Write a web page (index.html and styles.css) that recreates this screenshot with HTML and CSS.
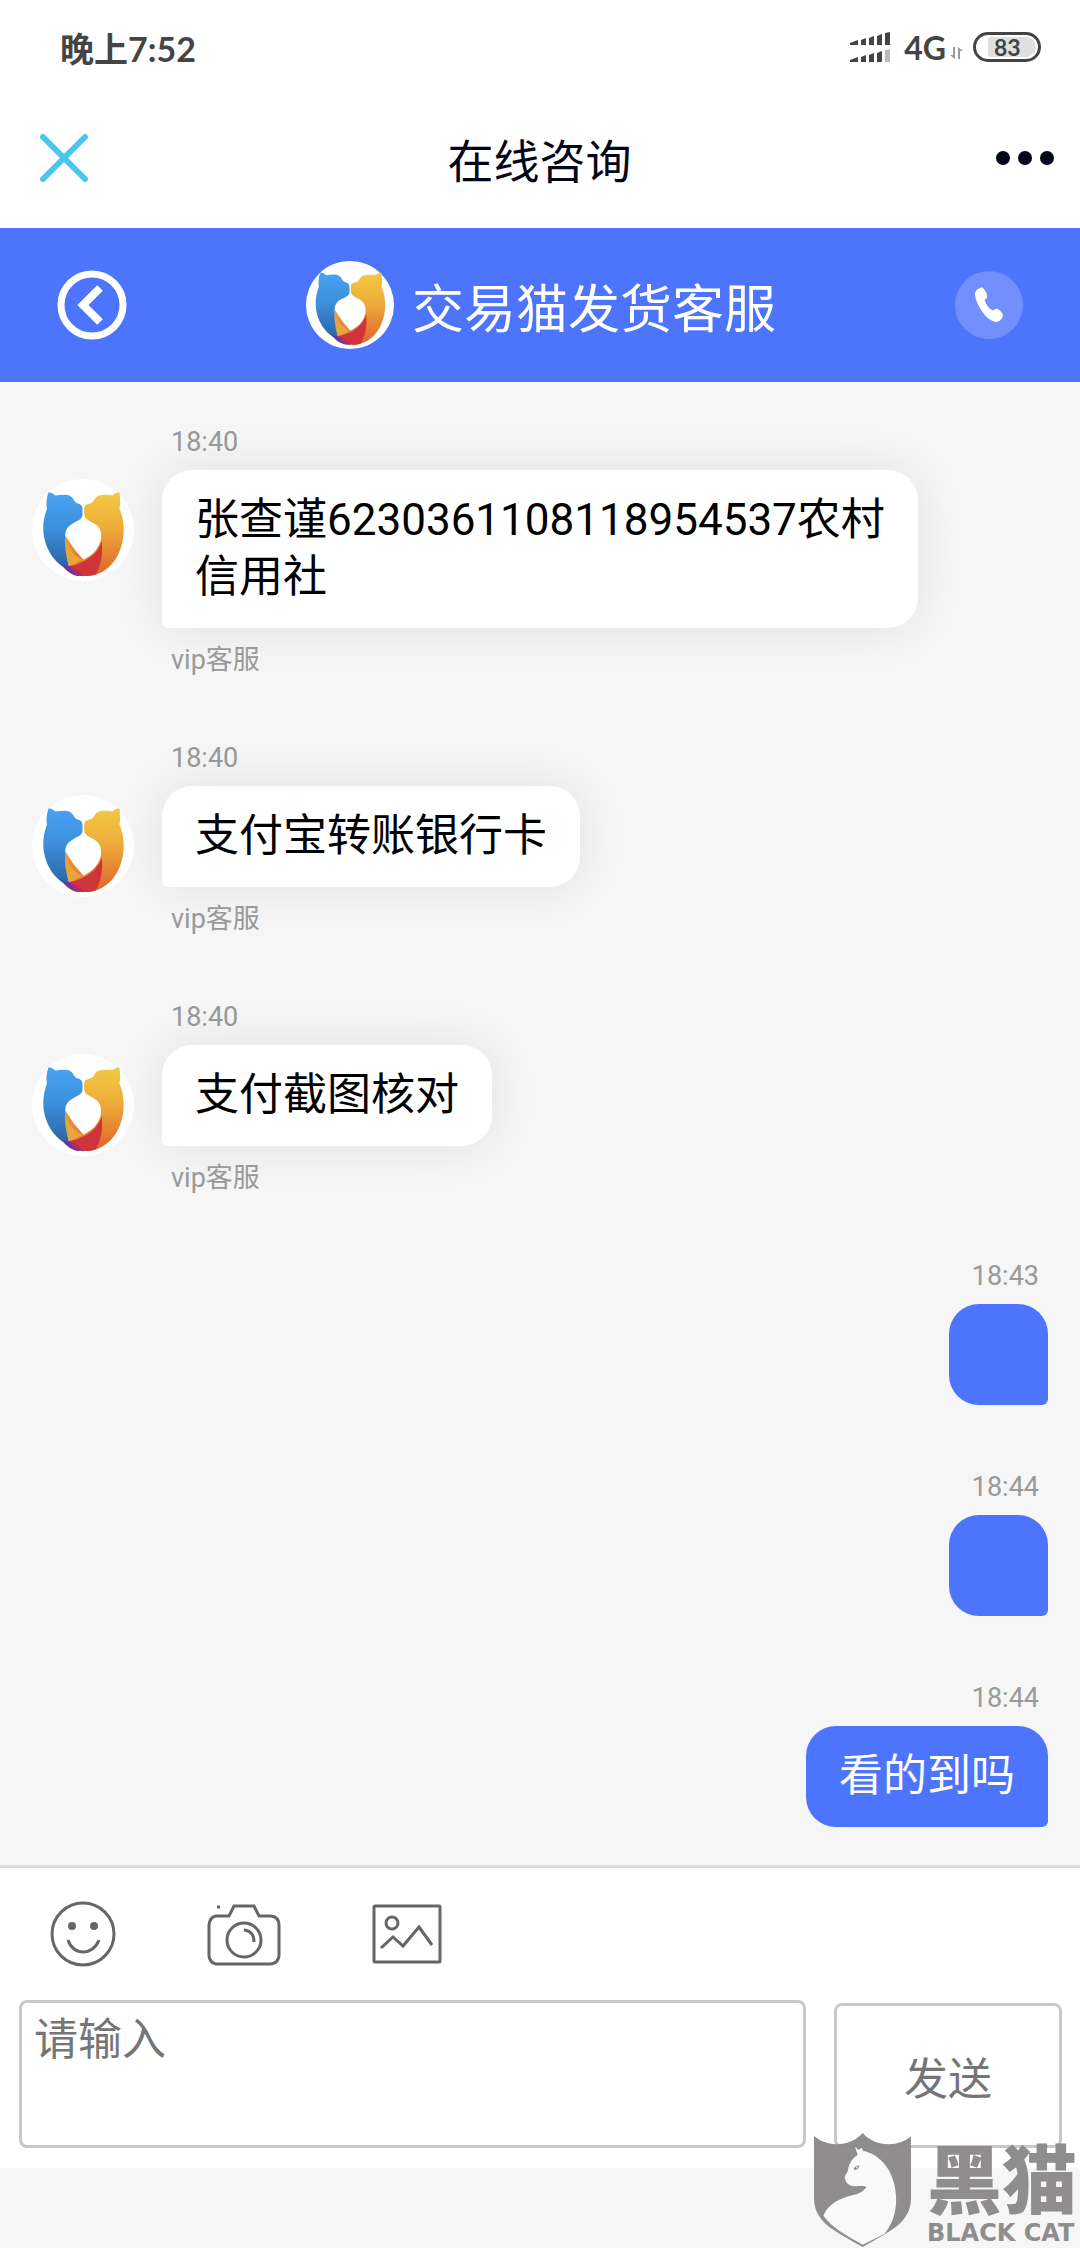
FILE: index.html
```html
<!DOCTYPE html>
<html lang="zh-CN">
<head>
  <meta charset="UTF-8">
  <meta name="viewport" content="width=device-width, initial-scale=1.0">
  <title>在线咨询</title>
  <link rel="stylesheet" href="styles.css">
</head>
<body>
  <!-- shared logo, used in the header and next to each message -->
  <svg class="defs" width="0" height="0" aria-hidden="true">
    <defs>
      <linearGradient id="blue" x1="0" y1="0" x2="0" y2="1">
        <stop offset="0" stop-color="#47a3f3"/>
        <stop offset="0.45" stop-color="#3d8fdc"/>
        <stop offset="1" stop-color="#2a62a0"/>
      </linearGradient>
      <linearGradient id="gold" x1="0" y1="0" x2="0" y2="1">
        <stop offset="0" stop-color="#f3c843"/>
        <stop offset="0.4" stop-color="#eeae3a"/>
        <stop offset="1" stop-color="#e0622c"/>
      </linearGradient>
      <symbol id="logo" viewBox="38 205 307 307">
        <circle cx="191.500" cy="358.500" r="153.500" fill="#fff"/>
        <path fill="url(#gold)" d="M302 247C292 243 286 251 280 254C264 252 247 252 237 256C227 259 227 269 219 276C211 282 197 279 195 292V312C196 327 212 331 225 339C240 348 247 360 246 382C242 413 221 434 193 448L165 416L138 374C135 414 142 449 156 479C173 493 198 501 222 495C281 481 316 420 314 352C313 325 307 308 301 293C306 279 302 266 302 247Z"/>
        <path fill="#e9a43b" d="M138 385C145 412 164 436 190 449L151 468C140 441 136 416 138 385Z"/>
        <path fill="url(#blue)" d="M88 245C98 245 103 252 110 255C125 252 144 250 154 257C164 263 163 274 174 278C185 281 190 285 190 297V312C189 327 176 330 162 338C145 347 138 358 138 378C135 415 143 447 153 480C103 461 72 407 72 354C72 328 77 312 83 294C80 278 82 261 88 245Z"/>
        <path fill="#cf343c" d="M248 392C236 429 205 457 151 467L154 481C175 497 205 502 230 492C245 466 252 431 248 392Z"/>
        <path fill="#6c359a" d="M124 459C133 465 143 468 151 467C157 480 168 489 186 497C160 498 139 481 124 459Z"/>
        <path fill="#b02c68" d="M151 467C161 468 182 483 194 498C174 497 161 488 151 467Z"/>
      </symbol>
    </defs>
  </svg>

  <div class="status-bar">
    <span class="clock">晚上7:52</span>
    <div class="status-icons">
      <svg class="signal" viewBox="0 0 40 31" aria-hidden="true">
        <g fill="#444">
          <path d="M0 11L8 8V13H0ZM11 8L16 6V13H11ZM19 6L24 4V13H19ZM27 4L32 2V13H27ZM35 1L40 0V13H35Z"/>
          <path d="M0 28L8 25V30H0ZM11 25L16 23V30H11ZM19 23L24 21V30H19ZM27 21L32 19V30H27Z"/>
        </g>
        <path fill="#bbb" d="M35 18L40 17V30H35Z"/>
      </svg>
      <span class="network">4G</span>
      <svg class="traffic" viewBox="0 0 14 12" aria-hidden="true">
        <path fill="#999" d="M3 0H5V12L0 8H3ZM8 12V0L13 4H10V12Z"/>
      </svg>
      <span class="battery"><span class="battery-level">83</span></span>
    </div>
  </div>

  <nav class="nav-bar">
    <button type="button" class="icon-button" aria-label="关闭">
      <svg width="48" height="48" viewBox="0 0 48 48" fill="none" stroke="#4cc5f1" stroke-width="6" stroke-linecap="round">
        <path d="M3 3L45 45M45 3L3 45"/>
      </svg>
    </button>
    <h1>在线咨询</h1>
    <button type="button" class="icon-button" aria-label="更多">
      <svg width="64" height="16" viewBox="0 0 64 16" fill="#030519">
        <circle cx="12" cy="8" r="7"/>
        <circle cx="34" cy="8" r="7"/>
        <circle cx="56" cy="8" r="7"/>
      </svg>
    </button>
  </nav>

  <header class="chat-header">
    <button type="button" class="icon-button" aria-label="返回">
      <svg width="70" height="70" viewBox="0 0 70 70" fill="none" stroke="#fff">
        <circle cx="35" cy="35" r="31" stroke-width="7"/>
        <path d="M43 18L26 35L43 52" stroke-width="8"/>
      </svg>
    </button>
    <div class="agent">
      <svg class="agent-logo" aria-hidden="true"><use href="#logo"/></svg>
      <h2>交易猫发货客服</h2>
    </div>
    <button type="button" class="icon-button call" aria-label="电话">
      <svg width="28" height="36" viewBox="0 0 28 36" fill="#fff">
        <path d="M3 2C5 1 7 0 8 1C10 3 13 8 12 10C12 12 9 12 10 14C12 19 14 21 17 23C19 24 20 21 23 22C26 24 28 27 28 29C27 32 24 35 21 35C15 34 10 29 6 23C2 16 0 11 0 7C0 5 1 3 3 2Z"/>
      </svg>
    </button>
  </header>

  <main class="messages">
    <div class="message received">
      <svg class="avatar" aria-hidden="true"><use href="#logo"/></svg>
      <div class="content">
        <time>18:40</time>
        <p class="bubble">张查谨6230361108118954537农村信用社</p>
        <span class="sender">vip客服</span>
      </div>
    </div>
    <div class="message received">
      <svg class="avatar" aria-hidden="true"><use href="#logo"/></svg>
      <div class="content">
        <time>18:40</time>
        <p class="bubble">支付宝转账银行卡</p>
        <span class="sender">vip客服</span>
      </div>
    </div>
    <div class="message received">
      <svg class="avatar" aria-hidden="true"><use href="#logo"/></svg>
      <div class="content">
        <time>18:40</time>
        <p class="bubble">支付截图核对</p>
        <span class="sender">vip客服</span>
      </div>
    </div>
    <div class="message sent">
      <div class="content">
        <time>18:43</time>
        <p class="bubble"></p>
      </div>
    </div>
    <div class="message sent">
      <div class="content">
        <time>18:44</time>
        <p class="bubble"></p>
      </div>
    </div>
    <div class="message sent">
      <div class="content">
        <time>18:44</time>
        <p class="bubble">看的到吗</p>
      </div>
    </div>
  </main>

  <form class="composer">
    <div class="tools">
      <button type="button" class="icon-button" aria-label="表情">
        <svg width="66" height="66" viewBox="0 0 66 66" fill="none" stroke="#666" stroke-width="3">
          <circle cx="33" cy="33" r="31"/>
          <circle cx="22" cy="25" r="4" fill="#666" stroke="none"/>
          <circle cx="44" cy="25" r="4" fill="#666" stroke="none"/>
          <path d="M18 39C23 55 43 55 49 39"/>
        </svg>
      </button>
      <button type="button" class="icon-button" aria-label="拍照">
        <svg width="74" height="66" viewBox="0 0 74 66" fill="none" stroke="#666" stroke-width="3">
          <path d="M9 15H22L27 5H47L52 15H64Q72 16 72 24V55Q71 62 64 63H9Q3 62 2 55V24Q3 16 9 15Z"/>
          <circle cx="37" cy="39" r="17"/>
          <path d="M37 29Q47 30 47 41"/>
          <path d="M10 6H13"/>
        </svg>
      </button>
      <button type="button" class="icon-button" aria-label="图片">
        <svg width="70" height="60" viewBox="0 0 70 60" fill="none" stroke="#666" stroke-width="3">
          <rect x="2" y="2" width="66" height="56" rx="1"/>
          <circle cx="20" cy="19" r="6"/>
          <path d="M9 44L21 33L31 42L47 23L60 41"/>
        </svg>
      </button>
    </div>
    <div class="input-row">
      <textarea id="message-input" aria-label="消息" placeholder="请输入"></textarea>
      <button type="submit" class="send">发送</button>
    </div>
  </form>

  <div class="watermark">
    <svg width="97" height="114" viewBox="153 519 291 342" aria-hidden="true">
      <path fill="#8b898a" d="M153 527C193 564 264 560 299 519C335 560 404 564 444 529V713C444 791 376 815 299 861C222 815 153 791 153 713Z"/>
      <path fill="#fafafa" d="M276 560L287 570L295 563L301 573C345 581 380 620 392 666C409 729 396 782 365 821L299 854C256 829 206 803 181 767C196 731 231 715 270 705C288 701 303 694 310 680C292 676 278 681 265 677C252 674 247 663 245 652C246 644 253 640 255 631C258 608 269 594 284 585Z"/>
      <path fill="#8b898a" d="M272 625C277 620 283 616 289 616C289 624 283 630 275 631Z"/>
      <path fill="#fafafa" d="M279 620L285 619L281 627Z"/>
    </svg>
    <div class="watermark-text">
      <span class="watermark-cn">黑猫</span>
      <span class="watermark-en">BLACK CAT</span>
    </div>
  </div>
</body>
</html>
```

FILE: styles.css
```css
* {
  margin: 0;
  padding: 0;
  box-sizing: border-box;
}

body {
  position: relative;
  min-height: 100vh;
  background-color: #f6f6f6;
  color: #000;
  font-family: Roboto, "Noto Sans CJK SC", sans-serif;
}

svg {
  display: block;
}

.defs {
  position: absolute;
}

button {
  font-family: inherit;
  cursor: pointer;
}

.icon-button {
  border: none;
  background: none;
}

/* phone status bar */
.status-bar {
  display: flex;
  justify-content: space-between;
  align-items: center;
  height: 94px;
  padding: 0 39px 0 60px;
  background-color: #fff;
  color: #444;
}

.clock {
  font-family: Lato, "Noto Sans CJK SC", sans-serif;
  font-size: 34px;
  font-weight: bold;
}

.status-icons {
  display: flex;
  align-items: center;
}

.signal {
  width: 40px;
  height: 31px;
}

.network {
  margin-left: 14px;
  font-family: Lato, sans-serif;
  font-size: 32px;
  font-weight: bold;
}

.traffic {
  width: 14px;
  height: 12px;
  margin: 12px 9px 0 4px;
}

.battery {
  display: flex;
  justify-content: flex-end;
  width: 68px;
  height: 30px;
  padding: 2px;
  border: 3px solid #444;
  border-radius: 15px;
}

.battery-level {
  width: 48px;
  padding-left: 6px;
  border-radius: 2px 10px 10px 2px;
  background-color: #e0e0e0;
  font-family: Lato, sans-serif;
  font-size: 23px;
  font-weight: bold;
  line-height: 20px;
}

/* title bar */
.nav-bar {
  display: flex;
  justify-content: space-between;
  align-items: center;
  height: 134px;
  padding: 0 25px 6px 40px;
  background-color: #fff;
}

.nav-bar h1 {
  color: #030519;
  font-size: 46px;
  font-weight: normal;
}

.chat-header {
  display: flex;
  justify-content: space-between;
  align-items: center;
  height: 154px;
  padding: 0 57px;
  background-color: #4d74fc;
  color: #fff;
}

.agent {
  display: flex;
  align-items: center;
  gap: 18px;
}

.agent-logo {
  width: 88px;
  height: 88px;
}

.agent h2 {
  font-size: 52px;
  font-weight: normal;
}

.call {
  display: flex;
  justify-content: center;
  align-items: center;
  width: 68px;
  height: 68px;
  border-radius: 50%;
  background-color: #7190fd;
}

/* messages */
.messages {
  display: flex;
  flex-direction: column;
  gap: 66px;
  padding: 44px 32px 38px;
}

.message {
  display: flex;
}

.content {
  display: flex;
  flex-direction: column;
  align-items: flex-start;
  max-width: 756px;
}

.avatar {
  flex-shrink: 0;
  width: 102px;
  height: 102px;
  margin: 53px 28px 0 0;
}

.message time,
.sender {
  padding: 0 9px;
  color: #999;
  font-size: 27px;
  line-height: 32px;
}

.bubble {
  min-width: 99px;
  min-height: 101px;
  margin-top: 12px;
  padding: 22px 33px;
  border-radius: 30px 30px 30px 6px;
  background-color: #fff;
  box-shadow: 0 0 50px rgba(0, 0, 0, 0.09);
  font-size: 44px;
  line-height: 57px;
}

.sender {
  margin-top: 16px;
}

.sent {
  justify-content: flex-end;
}

.sent .content {
  align-items: flex-end;
}

.sent .bubble {
  border-radius: 30px 30px 6px 30px;
  background-color: #4d74fc;
  box-shadow: none;
  color: #fff;
}

/* input area */
.composer {
  padding: 0 18px 20px 19px;
  border-top: 3px solid #ddd;
  background-color: #fff;
}

.tools {
  display: flex;
  align-items: center;
  gap: 91px;
  height: 132px;
  padding-left: 31px;
}

.input-row {
  display: flex;
  align-items: flex-end;
  gap: 28px;
}

.input-row textarea {
  flex: 1;
  min-width: 0;
  height: 148px;
  padding: 9px 12px;
  border: 3px solid #c8c8c8;
  border-radius: 8px;
  background-color: #fff;
  font-family: inherit;
  font-size: 44px;
  line-height: 57px;
  resize: none;
}

.input-row textarea::placeholder {
  color: #757575;
}

.send {
  width: 228px;
  height: 145px;
  border: 3px solid #c8c8c8;
  border-radius: 8px;
  background-color: #fff;
  color: #757575;
  font-size: 44px;
}

.watermark {
  position: absolute;
  right: 3px;
  bottom: 1px;
  display: flex;
  align-items: flex-end;
  gap: 16px;
  opacity: 0.96;
  pointer-events: none;
}

.watermark-text {
  display: flex;
  flex-direction: column;
  color: #8b898a;
}

.watermark-cn {
  font-family: "Noto Sans CJK SC", sans-serif;
  font-size: 75px;
  font-weight: 900;
  line-height: 86px;
}

.watermark-en {
  font-family: "DejaVu Sans", sans-serif;
  font-size: 24px;
  font-weight: bold;
  line-height: 28px;
}
```
